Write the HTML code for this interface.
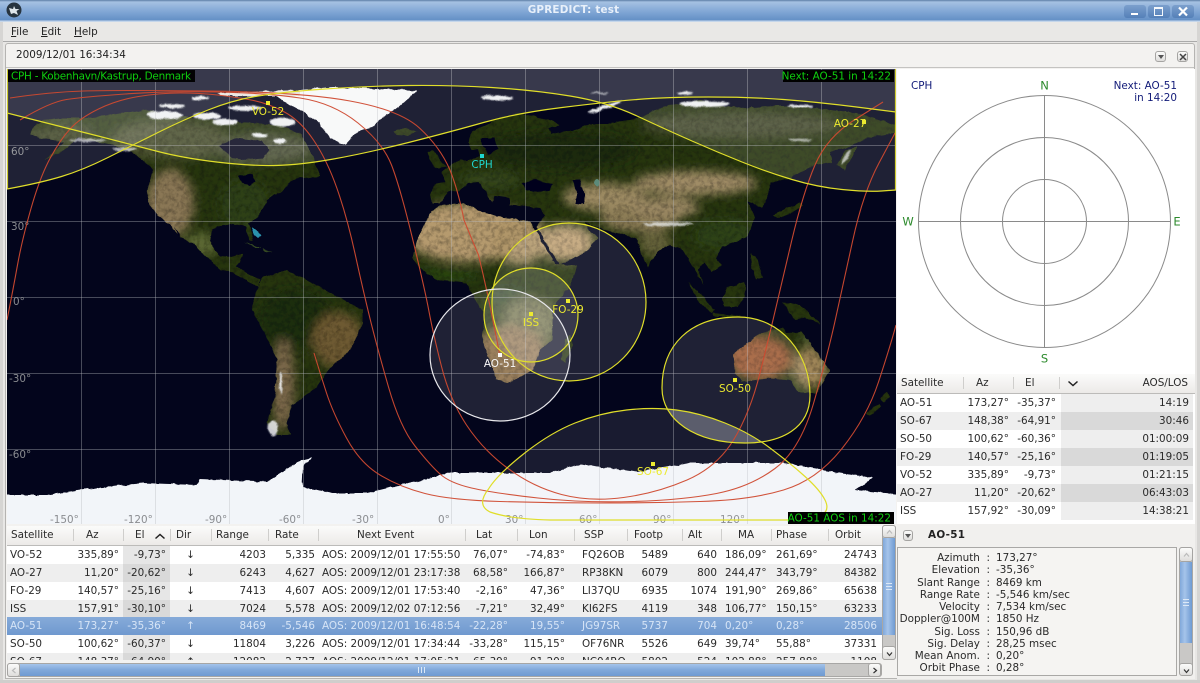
<!DOCTYPE html>
<html><head><meta charset="utf-8"><title>GPREDICT: test</title>
<style>
html,body{margin:0;padding:0;width:1200px;height:683px;overflow:hidden;background:#e8e7e5}
body{font:10.4px/12px "DejaVu Sans","Liberation Sans",sans-serif;color:#2a2a2a;position:relative}
.a{position:absolute}
#title{left:0;top:0;width:1200px;height:22px;background:linear-gradient(#5d7ea6 0,#a5c1e2 2px,#83a8d6 11px,#6490c6 20px,#c5d6ea 21px)}
#title b{position:absolute;left:0;width:1147px;text-align:center;top:4px;color:#e8f0fa;font-size:10.4px;letter-spacing:.2px}
.wb{position:absolute;top:5px;width:22px;height:13px;background:linear-gradient(#7b9fcd,#5480b8);border-radius:3px;border:0}
#menu{left:0;top:22px;width:1200px;height:19px;background:#e9e8e6;border-bottom:1px solid #aaa}
#menu span{position:absolute;top:4px;color:#222}
#tab{left:5px;top:43px;width:1190px;height:636px;background:#f3f2f0;border:1px solid #b5b4b2;border-radius:3px 3px 0 0;box-sizing:border-box}
.hd{background:linear-gradient(#fbfbfa,#eceae8);border-bottom:1px solid #bcbbb9;box-sizing:border-box}
.hd span{position:absolute;top:3px;white-space:nowrap}
.hd i{position:absolute;top:3px;width:1px;height:12px;background:#cfcecc}
.g{display:grid;position:absolute;left:0;width:875px;height:17.85px;line-height:18px;white-space:nowrap;
grid-template-columns:66px 50px 47px 41px 57px 50px 147px 52px 57px 53px 55px 39px 50px 57px 54px}
.g span{display:block;text-align:right;box-sizing:border-box;overflow:visible}
.g span:nth-child(1){text-align:left;padding-left:3px}
.g span:nth-child(2),.g span:nth-child(3){padding-right:4px}
.g span:nth-child(3){background:#e6e6e6}
.g span:nth-child(4){text-align:center}
.g span:nth-child(5){padding-right:2px}
.g span:nth-child(6){padding-right:3px}
.g span:nth-child(7){text-align:left;padding-left:4px}
.g span:nth-child(8),.g span:nth-child(9){padding-right:9px}
.g span:nth-child(10){text-align:left;padding-left:8px}
.g span:nth-child(11){padding-right:14px}
.g span:nth-child(12){padding-right:4px}
.g span:nth-child(13){text-align:left;padding-left:4px}
.g span:nth-child(14){text-align:left;padding-left:5px}
.g span:nth-child(15){padding-right:5px}
.o{background:#eeeeee}.g.o span:nth-child(3){background:#d9d9d9}
.g.s{background:linear-gradient(#86abd9,#6f99cf);color:#d6e4f6}.g.s span:nth-child(3){background:none}
.q{display:grid;position:absolute;left:0;width:296px;height:18px;line-height:18px;white-space:nowrap;grid-template-columns:66px 46px 47px 5px 132px}
.q span{text-align:right;display:block}
.q span:nth-child(1){text-align:left;padding-left:3px}
.q span:nth-child(5){background:#eeeeee;padding-right:4px;box-sizing:border-box}
.q.o span:nth-child(5){background:#d9d9d9}
.sb{position:absolute;background:#c9c8c6;border:1px solid #a8a7a5;box-sizing:border-box;border-radius:3px}
.th{position:absolute;background:linear-gradient(90deg,#80a8da,#a5c4ea 40%,#6e9ad2)}
.thh{position:absolute;background:linear-gradient(#a5c4ea,#80a8da 50%,#6e9ad2)}
.btn{position:absolute;background:linear-gradient(#fbfbfa,#dedddb);border:1px solid #a5a4a2;box-sizing:border-box;border-radius:3px}
.d{position:absolute;left:0;width:92px;text-align:right;white-space:nowrap}
.d2{position:absolute;left:98px;white-space:nowrap}
</style></head>
<body>
<div class="a" id="title"><b>GPREDICT: test</b>
<svg class="a" style="left:5px;top:1px" width="18" height="18" viewBox="0 0 18 18"><circle cx="9" cy="9" r="7.5" fill="#27343f"/><path d="M4 7l4 1 1-3 1.500 3 4 0-3 2 1.500 4-4-2-3 1z" fill="#dfe6ea"/></svg>
<div class="wb" style="left:1124px"><div class="a" style="left:7px;top:8px;width:7px;height:2px;background:#fff"></div></div>
<div class="wb" style="left:1148px"><div class="a" style="left:6px;top:2px;width:9px;height:9px;border:1.500px solid #f4f8fc;box-sizing:border-box;border-top-width:2.500px"></div></div>
<div class="wb" style="left:1172px"><svg class="a" style="left:5px;top:1px" width="12" height="11"><path d="M2 1.500l8 8M10 1.500l-8 8" stroke="#fff" stroke-width="2.200"/></svg></div>
</div>
<div class="a" id="menu"><span style="left:11px"><u>F</u>ile</span><span style="left:41px"><u>E</u>dit</span><span style="left:74px"><u>H</u>elp</span></div>
<div class="a" id="tab"></div>
<div class="a" style="left:16px;top:49px;color:#222">2009/12/01 16:34:34</div>
<div class="btn" style="left:1155px;top:51px;width:11px;height:11px"><svg class="a" style="left:1px;top:2px" width="8" height="6"><path d="M1 1h6L4 5z" fill="#555"/></svg></div>
<div class="btn" style="left:1177px;top:51px;width:11px;height:11px"><svg class="a" style="left:1px;top:1px" width="8" height="8"><path d="M1 1l6 6M7 1L1 7" stroke="#444" stroke-width="1.500"/></svg></div>
<div class="a" style="left:6px;top:67px;width:1188px;height:1px;background:#c4c3c1"></div>

<svg class="a" style="left:7px;top:69px" width="889" height="455" viewBox="7 69 889 455" font-family="DejaVu Sans,Liberation Sans,sans-serif" font-size="10.400">
<defs>
<filter id="bl" x="-20%" y="-20%" width="140%" height="140%"><feGaussianBlur stdDeviation="5"/></filter>
<filter id="bs" x="-20%" y="-20%" width="140%" height="140%"><feGaussianBlur stdDeviation=".9"/></filter>
<filter id="rg" x="-5%" y="-5%" width="110%" height="110%"><feTurbulence type="fractalNoise" baseFrequency=".13" numOctaves="3" seed="4"/><feDisplacementMap in="SourceGraphic" scale="3.500" xChannelSelector="R" yChannelSelector="G"/><feGaussianBlur stdDeviation=".35"/></filter>
<filter id="nz" x="0" y="0" width="100%" height="100%"><feTurbulence type="fractalNoise" baseFrequency=".22" numOctaves="3" seed="9"/><feColorMatrix values="0 0 0 0 0  0 0 0 0 0  0 0 0 0 0  2.200 0 0 0 -.85"/></filter>
<clipPath id="land"><path d="
M43,120 60,118 83,118 110,115 143,110 190,118 240,122 280,125 302,135 312,155 318,170 320,177 310,178 300,177 290,182 280,192 267,200 262,210 257,217 249,223 253,240 250,240 245,226 233,224 220,226 213,229 210,240 212,247 220,256 233,257 243,253 240,262 236,266 245,272 260,280 258,287 240,277 233,273 220,270 207,257 195,245 180,237 170,225 160,217 150,205 147,193 150,180 153,170 143,160 133,153 120,147 100,142 77,138 65,150 45,160 55,150 65,142 40,138 30,135 33,128Z
M263,277 287,270 320,287 330,293 363,310 363,323 350,350 330,368 317,387 300,400 292,405 287,423 290,435 277,435 267,423 275,393 277,360 267,337 252,310 255,293Z
M430,195 434,184 445,182 442,172 450,165 460,160 470,160 480,156 478,150 472,150 468,142 472,132 485,125 500,118 520,113 540,118 552,120 560,125 548,128 552,134 575,130 590,124 610,124 625,120 640,118 652,112 668,105 690,103 700,100 720,106 745,108 775,106 800,106 830,110 860,114 896,125 896,133 870,137 852,145 846,148 830,152 832,162 815,165 800,172 790,178 770,183 768,195 763,208 755,205 748,202 755,217 747,237 722,247 716,258 722,265 712,273 704,262 698,270 703,285 696,272 690,262 683,250 670,245 660,250 653,258 648,268 642,255 637,240 625,235 605,230 596,226 585,222 590,232 598,238 585,252 560,265 550,250 537,226 545,215 540,208 520,206 510,205 510,198 495,196 492,203 486,192 478,182 468,183 460,190 448,192 440,203 432,203Z
M420,233 430,213 440,205 463,203 477,210 503,218 530,221 555,264 577,266 572,283 553,307 552,340 540,350 533,370 507,383 497,380 482,340 485,313 473,297 467,283 437,280 420,268 412,258Z
M565,340 570,335 573,345 566,362 561,360Z
M733,355 760,333 783,327 787,333 802,332 830,370 817,393 800,393 790,380 770,378 743,382 735,373Z
M688,283 695,288 715,310 712,314 700,303Z M722,300 727,287 745,282 745,295 738,307 725,307Z M713,313 740,316 740,318 713,316Z M783,303 800,305 820,323 805,318 795,320Z
M750,253 757,258 763,278 756,280 752,268Z M773,215 790,207 800,203 803,206 790,214 778,218Z M837,165 845,150 857,147 845,170Z
M427,152 434,150 440,160 447,167 435,169 430,160Z M393,131 405,128 417,132 408,136 396,135Z
M865,413 880,403 882,406 870,416Z M880,398 887,392 890,396 884,402Z"/></clipPath>
<clipPath id="c67"><path d="M488.500,489 Q497,475 523.500,454 Q550,433 575,423 Q600,413 626.500,410 Q653,407 676.500,410 Q700,413 725,423 Q750,433 770,448 Q790,463 805,476.500 Q820,490 825,500 Q830,510 822,515 Q810,520 790,520 L550,520 Q510,519 490,512 Q476,505 488.500,489Z"/></clipPath>
</defs>
<rect x="7" y="69" width="889" height="455" fill="#03051c"/>
<g filter="url(#rg)">
<g clip-path="url(#land)">
<rect x="7" y="69" width="889" height="455" fill="#27350f"/>
<g filter="url(#bl)">
<ellipse cx="170" cy="203" rx="24" ry="34" fill="#8a7755"/>
<ellipse cx="200" cy="245" rx="18" ry="13" fill="#5a6633"/>
<ellipse cx="245" cy="205" rx="26" ry="26" fill="#2f4118"/>
<ellipse cx="170" cy="140" rx="60" ry="20" fill="#4e5232"/>
<ellipse cx="265" cy="148" rx="48" ry="15" fill="#50543a"/>
<ellipse cx="60" cy="135" rx="34" ry="9" fill="#4a4f30"/>
<ellipse cx="295" cy="320" rx="38" ry="30" fill="#1f2e0d"/>
<ellipse cx="338" cy="340" rx="26" ry="28" fill="#6e5a32"/>
<ellipse cx="283" cy="385" rx="12" ry="46" fill="#7a684a"/>
<ellipse cx="468" cy="232" rx="66" ry="30" fill="#b59a6e"/>
<ellipse cx="520" cy="240" rx="28" ry="24" fill="#b09669"/>
<ellipse cx="566" cy="243" rx="28" ry="18" fill="#c0a274"/>
<ellipse cx="445" cy="275" rx="34" ry="5" fill="#2c4812"/>
<ellipse cx="508" cy="297" rx="24" ry="10" fill="#253a13"/>
<ellipse cx="530" cy="322" rx="28" ry="24" fill="#6a6a40"/>
<ellipse cx="510" cy="358" rx="38" ry="32" fill="#8e7048"/>
<ellipse cx="640" cy="218" rx="40" ry="14" fill="#8a7a55"/>
<ellipse cx="605" cy="197" rx="42" ry="14" fill="#9c8a62"/>
<ellipse cx="695" cy="183" rx="62" ry="12" fill="#a08c66"/>
<ellipse cx="665" cy="207" rx="34" ry="11" fill="#9a8762"/>
<ellipse cx="725" cy="235" rx="32" ry="16" fill="#2e4218"/>
<ellipse cx="655" cy="243" rx="16" ry="14" fill="#66643a"/>
<ellipse cx="560" cy="150" rx="75" ry="18" fill="#1f2c0c"/>
<ellipse cx="740" cy="125" rx="100" ry="14" fill="#4a5030"/>
<ellipse cx="760" cy="358" rx="32" ry="22" fill="#a05c36"/>
<ellipse cx="810" cy="368" rx="18" ry="20" fill="#a08658"/>
<ellipse cx="810" cy="340" rx="10" ry="8" fill="#4d5a2e"/>
<ellipse cx="490" cy="180" rx="30" ry="8" fill="#36461f"/>
</g>
<rect x="7" y="69" width="889" height="455" filter="url(#nz)" opacity=".28"/>
</g>
<!-- inland water -->
<path d="M219,146 235,138 262,141 270,150 262,158 245,160 232,158Z" fill="#0c0f24"/>
<path d="M522,183 535,180 553,184 550,191 535,192 525,190Z M572,180 580,180 585,195 584,204 575,203 577,192Z M480,138 495,138 498,150 488,155 484,148Z M238,176 252,174 256,182 248,185 242,183Z" fill="#03051c"/>
<path d="M175,227 181,237 178,236Z" fill="#03051c"/>
<ellipse cx="597" cy="183" rx="2.500" ry="4" fill="#5d8a7a"/>
<path d="M253,228 262,235 258,238 252,233Z" fill="#2b93ad"/>
<path d="M244,242 262,248 256,248Z M262,249 272,251 265,252Z" fill="#344824"/>
<g fill="#eef0f2" filter="url(#bs)">
<ellipse cx="165" cy="115" rx="18" ry="4"/><ellipse cx="172" cy="106" rx="13" ry="2"/><ellipse cx="200" cy="98" rx="9" ry="2"/><ellipse cx="207" cy="116" rx="14" ry="3.500"/><ellipse cx="225" cy="122" rx="12" ry="3.500"/><ellipse cx="283" cy="122" rx="13" ry="4.500"/><ellipse cx="245" cy="108" rx="17" ry="2.500"/><ellipse cx="260" cy="135" rx="8" ry="2.500"/><ellipse cx="280" cy="141" rx="7" ry="2.500"/><ellipse cx="88" cy="140" rx="18" ry="1.500" opacity=".7"/><ellipse cx="125" cy="149" rx="12" ry="2" opacity=".7"/>
<ellipse cx="497" cy="98" rx="16" ry="2.500"/><ellipse cx="605" cy="107" rx="18" ry="2" transform="rotate(-20 605 107)"/><ellipse cx="705" cy="104" rx="25" ry="3"/><ellipse cx="685" cy="93" rx="8" ry="1.500"/><ellipse cx="600" cy="93" rx="9" ry="1" opacity=".6"/><ellipse cx="800" cy="106" rx="13" ry="1.500"/>
<ellipse cx="800" cy="140" rx="12" ry="1.500" opacity=".6"/><ellipse cx="846" cy="157" rx="1.800" ry="9" transform="rotate(30 846 157)" opacity=".7"/>
<ellipse cx="668" cy="224" rx="25" ry="1.800" opacity=".75"/><ellipse cx="281" cy="383" rx="1.200" ry="11"/><ellipse cx="273" cy="428" rx="5" ry="8" opacity=".85"/>
</g>
<path d="M275,95 300,90 333,87 417,91 400,106 385,116 372,127 358,131 345,145 330,138 318,122 300,110 285,102Z" fill="#f8f9f9"/>
<path d="M217,93 300,90 300,96 225,96Z" fill="#e8e2da"/>
<path d="M-5,495 47,495 80,490 143,483 197,485 200,479 267,482 283,472 297,462 313,457 303,467 302,487 333,493 367,493 450,473 493,473 550,473 580,464 637,472 690,463 783,463 873,478 855,490 905,495 905,545 -5,545Z" fill="#f2f5f9"/>
</g>
<!-- grid -->
<g stroke="#b8bac0" stroke-opacity=".38" fill="none">
<path d="M81.500 69V524M155.500 69V524M229.500 69V524M303.500 69V524M377.500 69V524M451.500 69V524M525.500 69V524M599.500 69V524M673.500 69V524M747.500 69V524M821.500 69V524"/>
<path d="M7 145.500H896M7 221.500H896M7 297.500H896M7 373.500H896M7 449.500H896"/>
</g>
<g fill="#8a8c90"><text x="11" y="155">60°</text><text x="11" y="230">30°</text><text x="13" y="305">0°</text><text x="9" y="382">-30°</text><text x="9" y="458">-60°</text>
<text x="50" y="523">-150°</text><text x="124" y="523">-120°</text><text x="205" y="523">-90°</text><text x="279" y="523">-60°</text><text x="352" y="523">-30°</text><text x="438" y="523">0°</text><text x="505" y="523">30°</text><text x="579" y="523">60°</text><text x="653" y="523">90°</text><text x="720" y="523">120°</text></g>
<!-- footprint fills -->
<g fill="#fff" fill-opacity=".115" stroke="none">
<path d="M7,113 Q67,128 100,136.500 Q133,145 158,151.500 Q183,158 216.500,162 Q250,166 275,165.500 Q300,165 333.500,159 Q367,153 408.500,142.500 Q450,132 483.500,122.500 Q517,113 562,107.500 Q607,102 637,99.500 Q667,97 708.500,97 Q750,97 783.500,99.500 Q817,102 856.500,107 L896,112 V69 H7Z"/>
<path d="M7,189 Q40,183 61.500,176.500 Q83,170 108,157.500 Q133,145 158,132.500 Q183,120 208,110 Q233,100 258,96 Q283,92 325,89 Q367,86 408.500,85.500 Q450,85 491.500,87.500 Q533,90 570,96 Q607,102 637,116 Q667,130 692,141 Q717,152 742,162 Q767,172 792,179.500 Q817,187 842,189.500 Q867,192 881.500,191 L896,190 V69 H7Z"/>
<ellipse cx="531" cy="315" rx="47" ry="47"/><ellipse cx="569" cy="302" rx="77" ry="79"/><ellipse cx="500" cy="355" rx="70" ry="66"/>
<path d="M662,388C662,345 690,317 738,317 782,317 810,355 810,395 810,428 782,443 745,443 695,443 662,420 662,388Z"/>
<path d="M488.500,489 Q497,475 523.500,454 Q550,433 575,423 Q600,413 626.500,410 Q653,407 676.500,410 Q700,413 725,423 Q750,433 770,448 Q790,463 805,476.500 Q820,490 825,500 Q830,510 822,515 Q810,520 790,520 L550,520 Q510,519 490,512 Q476,505 488.500,489Z" fill-opacity=".09"/>
<path clip-path="url(#c67)" d="M662,388C662,345 690,317 738,317 782,317 810,355 810,395 810,428 782,443 745,443 695,443 662,420 662,388Z" fill-opacity=".2"/>
</g>
<!-- tracks -->
<g fill="none" stroke="#cf4a30" stroke-width="1.100" stroke-opacity=".95">
<path d="M314,353 Q320,373 326.500,393 Q333,413 346.500,438 Q360,463 380,475 Q400,487 425,493.500 Q450,500 500,501.500 Q550,503 600,503 Q650,503 700,501.500 Q750,500 783.500,490 Q817,480 842,448.500 Q867,417 878.500,382 Q890,347 896,325"/>
<path d="M7,320 Q13,290 17.500,265 Q22,240 31,208.500 Q40,177 50,158.500 Q60,140 70,129 Q80,118 98.500,109 Q117,100 138.500,96.500 Q160,93 180,93 Q200,93 217.500,95 Q235,97 251,100 Q267,103 283.500,111.500 Q300,120 313.500,140 Q327,160 337,188.500 Q347,217 355,253.500 Q363,290 370,318.500 Q377,347 388.500,387 Q400,427 415,446 Q430,465 440,474 Q450,483 471.500,488 Q493,493 538,498 Q583,503 633,501.500 Q683,500 716.500,493.500 Q750,487 775,468.500 Q800,450 813.500,403.500 Q827,357 834.500,323.500 Q842,290 852.500,241.500 Q863,193 879,163 L895,133"/>
<path d="M20,120 Q50,102 66.500,99.500 Q83,97 125,94 Q167,91 217,92 Q267,93 300,98 Q333,103 358,123 Q383,143 391.500,165 Q400,187 412.500,238.500 Q425,290 429,311.500 Q433,333 441.500,366.500 Q450,400 466.500,425 Q483,450 508,468.500 Q533,487 561.500,494.500 Q590,502 623.500,497.500 Q657,493 687,480 Q717,467 733.500,440 Q750,413 760,373 Q770,333 775,311.500 Q780,290 791.500,241.500 Q803,193 815,165 Q827,137 855,119.500 L883,102"/>
<path d="M10,98 Q50,92 83.500,91 Q117,90 208.500,91 Q300,92 350,101 Q400,110 420,128.500 Q440,147 450,170 Q458,190 464,220 Q470,235 478.500,255 Q487,290 493.500,323.500 Q498,345 500,357"/>
</g>
<!-- footprint strokes -->
<g fill="none" stroke="#e0de2a" stroke-width="1.200">
<path d="M7,113 Q67,128 100,136.500 Q133,145 158,151.500 Q183,158 216.500,162 Q250,166 275,165.500 Q300,165 333.500,159 Q367,153 408.500,142.500 Q450,132 483.500,122.500 Q517,113 562,107.500 Q607,102 637,99.500 Q667,97 708.500,97 Q750,97 783.500,99.500 Q817,102 856.500,107 L896,112"/>
<path d="M7,189 Q40,183 61.500,176.500 Q83,170 108,157.500 Q133,145 158,132.500 Q183,120 208,110 Q233,100 258,96 Q283,92 325,89 Q367,86 408.500,85.500 Q450,85 491.500,87.500 Q533,90 570,96 Q607,102 637,116 Q667,130 692,141 Q717,152 742,162 Q767,172 792,179.500 Q817,187 842,189.500 Q867,192 881.500,191 L896,190"/>
<path d="M7.500,69V189M895.500,69V190" stroke="#cfcc30"/>
<ellipse cx="531" cy="315" rx="47" ry="47"/><ellipse cx="569" cy="302" rx="77" ry="79"/>
<path d="M662,388C662,345 690,317 738,317 782,317 810,355 810,395 810,428 782,443 745,443 695,443 662,420 662,388Z"/>
<path d="M488.500,489 Q497,475 523.500,454 Q550,433 575,423 Q600,413 626.500,410 Q653,407 676.500,410 Q700,413 725,423 Q750,433 770,448 Q790,463 805,476.500 Q820,490 825,500 Q830,510 822,515 Q810,520 790,520 L550,520 Q510,519 490,512 Q476,505 488.500,489Z"/>
</g>
<ellipse cx="500" cy="355" rx="70" ry="66" fill="none" stroke="#e8e8ec" stroke-width="1.200"/>
<!-- satellites -->
<g fill="#ecea30" text-anchor="middle">
<rect x="266" y="101" width="4" height="4"/><text x="268" y="115">VO-52</text>
<rect x="862" y="120" width="4" height="4"/><text x="850" y="127">AO-27</text>
<rect x="529" y="312" width="4" height="4"/><text x="531" y="326">ISS</text>
<rect x="566" y="299" width="4" height="4"/><text x="568" y="313">FO-29</text>
<rect x="733" y="378" width="4" height="4"/><text x="735" y="392">SO-50</text>
<rect x="651" y="462" width="4" height="4"/><text x="653" y="475">SO-67</text>
</g>
<g fill="#fafafa" text-anchor="middle"><rect x="498" y="353" width="4" height="4"/><text x="500" y="367">AO-51</text></g>
<g fill="#1fd8d0" text-anchor="middle"><rect x="480" y="154" width="4" height="4"/><text x="482" y="168">CPH</text></g>
<rect x="8" y="70" width="187" height="12" fill="#000" fill-opacity=".95"/><text x="11" y="79.500" fill="#0fd00f" textLength="180">CPH - Kobenhavn/Kastrup, Denmark</text>
<rect x="783" y="70" width="111" height="12" fill="#000"/><text x="891" y="79.500" fill="#0fd00f" text-anchor="end">Next: AO-51 in 14:22</text>
<rect x="788" y="512" width="106" height="12" fill="#000"/><text x="891" y="521.500" fill="#0fd00f" text-anchor="end">AO-51 AOS in 14:22</text>
</svg>

<!-- polar -->
<div class="a" style="left:897px;top:69px;width:298px;height:456px;background:#fff"></div>
<svg class="a" style="left:897px;top:69px" width="298" height="305" font-family="DejaVu Sans,Liberation Sans,sans-serif" font-size="10.400">
<g fill="none" stroke="#8a8a8a" transform="translate(-897,-69)"><circle cx="1044.500" cy="221.500" r="126"/><circle cx="1044.500" cy="221.500" r="84"/><circle cx="1044.500" cy="221.500" r="42"/><path d="M1044.500 96V348M919 221.500H1171"/></g>
<g fill="#2c8a2c" font-size="11.500" text-anchor="middle"><text x="147.500" y="20.500">N</text><text x="147.500" y="293.500">S</text><text x="11" y="156.500">W</text><text x="280" y="156.500">E</text></g>
<g fill="#111a78"><text x="14" y="20">CPH</text><text x="280" y="20" text-anchor="end">Next: AO-51</text><text x="280" y="32" text-anchor="end">in 14:20</text></g>
</svg>
<!-- right table -->
<div class="a hd" style="left:897px;top:374px;width:298px;height:20px">
<span style="left:4px">Satellite</span><span style="left:79px">Az</span><span style="left:128px">El</span>
<svg class="a" style="left:170px;top:6px" width="12" height="8"><path d="M1.500 1.500L6 5.500 10.500 1.500" fill="none" stroke="#222" stroke-width="1.500"/></svg>
<span style="right:7px">AOS/LOS</span><i style="left:66px"></i><i style="left:116px"></i><i style="left:162px"></i></div>
<div class="a" style="left:897px;top:394px;width:298px;height:127px">
<div class="q" style="top:0"><span>AO-51</span><span>173,27°</span><span>-35,37°</span><span></span><span>14:19</span></div>
<div class="q o" style="top:18px"><span>SO-67</span><span>148,38°</span><span>-64,91°</span><span></span><span>30:46</span></div>
<div class="q" style="top:36px"><span>SO-50</span><span>100,62°</span><span>-60,36°</span><span></span><span>01:00:09</span></div>
<div class="q o" style="top:54px"><span>FO-29</span><span>140,57°</span><span>-25,16°</span><span></span><span>01:19:05</span></div>
<div class="q" style="top:72px"><span>VO-52</span><span>335,89°</span><span>-9,73°</span><span></span><span>01:21:15</span></div>
<div class="q o" style="top:90px"><span>AO-27</span><span>11,20°</span><span>-20,62°</span><span></span><span>06:43:03</span></div>
<div class="q" style="top:108px"><span>ISS</span><span>157,92°</span><span>-30,09°</span><span></span><span>14:38:21</span></div>
</div>
<!-- main table -->
<div class="a hd" style="left:7px;top:526px;width:875px;height:20px">
<span style="left:4px">Satellite</span><span style="left:79px">Az</span><span style="left:128px">El</span>
<svg class="a" style="left:147px;top:6px" width="12" height="8"><path d="M1.500 6.500L6 2.500 10.500 6.500" fill="none" stroke="#222" stroke-width="1.500"/></svg>
<span style="left:169px">Dir</span><span style="left:209px">Range</span><span style="left:268px">Rate</span><span style="left:350px">Next Event</span><span style="left:469px">Lat</span><span style="left:522px">Lon</span><span style="left:577px">SSP</span><span style="left:627px">Footp</span><span style="left:681px">Alt</span><span style="left:731px">MA</span><span style="left:769px">Phase</span><span style="left:828px">Orbit</span>
<i style="left:66px"></i><i style="left:116px"></i><i style="left:163px"></i><i style="left:204px"></i><i style="left:261px"></i><i style="left:311px"></i><i style="left:458px"></i><i style="left:510px"></i><i style="left:567px"></i><i style="left:620px"></i><i style="left:675px"></i><i style="left:714px"></i><i style="left:764px"></i><i style="left:821px"></i></div>
<div class="a" style="left:7px;top:546px;width:875px;height:114px;overflow:hidden;background:#fff">
<div class="g" style="top:0"><span>VO-52</span><span>335,89°</span><span>-9,73°</span><span>↓</span><span>4203</span><span>5,335</span><span>AOS: 2009/12/01 17:55:50</span><span>76,07°</span><span>-74,83°</span><span>FQ26OB</span><span>5489</span><span>640</span><span>186,09°</span><span>261,69°</span><span>24743</span></div>
<div class="g o" style="top:17.850px"><span>AO-27</span><span>11,20°</span><span>-20,62°</span><span>↓</span><span>6243</span><span>4,627</span><span>AOS: 2009/12/01 23:17:38</span><span>68,58°</span><span>166,87°</span><span>RP38KN</span><span>6079</span><span>800</span><span>244,47°</span><span>343,79°</span><span>84382</span></div>
<div class="g" style="top:35.700px"><span>FO-29</span><span>140,57°</span><span>-25,16°</span><span>↓</span><span>7413</span><span>4,607</span><span>AOS: 2009/12/01 17:53:40</span><span>-2,16°</span><span>47,36°</span><span>LI37QU</span><span>6935</span><span>1074</span><span>191,90°</span><span>269,86°</span><span>65638</span></div>
<div class="g o" style="top:53.550px"><span>ISS</span><span>157,91°</span><span>-30,10°</span><span>↓</span><span>7024</span><span>5,578</span><span>AOS: 2009/12/02 07:12:56</span><span>-7,21°</span><span>32,49°</span><span>KI62FS</span><span>4119</span><span>348</span><span>106,77°</span><span>150,15°</span><span>63233</span></div>
<div class="g s" style="top:71.400px"><span>AO-51</span><span>173,27°</span><span>-35,36°</span><span>↑</span><span>8469</span><span>-5,546</span><span>AOS: 2009/12/01 16:48:54</span><span>-22,28°</span><span>19,55°</span><span>JG97SR</span><span>5737</span><span>704</span><span>0,20°</span><span>0,28°</span><span>28506</span></div>
<div class="g" style="top:89.250px"><span>SO-50</span><span>100,62°</span><span>-60,37°</span><span>↓</span><span>11804</span><span>3,226</span><span>AOS: 2009/12/01 17:34:44</span><span>-33,28°</span><span>115,15°</span><span>OF76NR</span><span>5526</span><span>649</span><span>39,74°</span><span>55,88°</span><span>37331</span></div>
<div class="g o" style="top:107.100px"><span>SO-67</span><span>148,37°</span><span>-64,90°</span><span>↑</span><span>12082</span><span>2,737</span><span>AOS: 2009/12/01 17:05:21</span><span>-65,39°</span><span>-91,20°</span><span>NC04RO</span><span>5802</span><span>524</span><span>102,88°</span><span>257,88°</span><span>1108</span></div>
</div>
<!-- h scrollbar -->
<div class="sb" style="left:7px;top:663px;width:875px;height:14px"></div>
<div class="btn" style="left:7px;top:663px;width:13px;height:14px"><svg class="a" style="left:3px;top:3px" width="6" height="7"><path d="M4.500 1L1.500 3.500 4.500 6" fill="none" stroke="#bbb" stroke-width="1.200"/></svg></div>
<div class="thh" style="left:20px;top:664px;width:805px;height:12px"><div class="a" style="left:398px;top:3px;width:7px;height:6px;background:repeating-linear-gradient(90deg,#dce8f6 0 1px,transparent 1px 3px)"></div></div>
<div class="btn" style="left:868px;top:663px;width:13px;height:14px"><svg class="a" style="left:3px;top:3px" width="6" height="7"><path d="M1.500 1L4.500 3.500 1.500 6" fill="none" stroke="#333" stroke-width="1.200"/></svg></div>
<!-- v scrollbar 1 -->
<div class="sb" style="left:882px;top:525px;width:14px;height:135px"></div>
<div class="btn" style="left:882px;top:525px;width:14px;height:13px"><svg class="a" style="left:3px;top:3px" width="7" height="6"><path d="M1 4.500L3.500 1.500 6 4.500" fill="none" stroke="#bbb" stroke-width="1.200"/></svg></div>
<div class="th" style="left:883px;top:538px;width:12px;height:97px"><div class="a" style="left:3px;top:45px;width:6px;height:7px;background:repeating-linear-gradient(#dce8f6 0 1px,transparent 1px 3px)"></div></div>
<div class="btn" style="left:882px;top:646px;width:14px;height:14px"><svg class="a" style="left:3px;top:4px" width="7" height="6"><path d="M1 1.500L3.500 4.500 6 1.500" fill="none" stroke="#333" stroke-width="1.200"/></svg></div>
<!-- details -->
<div class="a" style="left:897px;top:524px;width:298px;height:155px;background:#f1f0ee"></div>
<div class="btn" style="left:903px;top:530px;width:10px;height:11px"><svg class="a" style="left:1px;top:2px" width="6" height="6"><path d="M0 1h6L3 5z" fill="#555"/></svg></div>
<div class="a" style="left:928px;top:529px;font-weight:bold;color:#222;letter-spacing:.3px">AO-51</div>
<div class="a" style="left:897px;top:547px;width:280px;height:129px;background:#f5f4f2;border:1px solid #a9a8a6;box-sizing:border-box;overflow:hidden">
<div class="d" style="top:4px">Azimuth&nbsp;&nbsp;:</div><div class="d2" style="top:4px">173,27°</div>
<div class="d" style="top:16.300px">Elevation&nbsp;&nbsp;:</div><div class="d2" style="top:16.300px">-35,36°</div>
<div class="d" style="top:28.500px">Slant Range&nbsp;&nbsp;:</div><div class="d2" style="top:28.500px">8469 km</div>
<div class="d" style="top:40.800px">Range Rate&nbsp;&nbsp;:</div><div class="d2" style="top:40.800px">-5,546 km/sec</div>
<div class="d" style="top:53px">Velocity&nbsp;&nbsp;:</div><div class="d2" style="top:53px">7,534 km/sec</div>
<div class="d" style="top:65.300px">Doppler@100M&nbsp;&nbsp;:</div><div class="d2" style="top:65.300px">1850 Hz</div>
<div class="d" style="top:77.500px">Sig. Loss&nbsp;&nbsp;:</div><div class="d2" style="top:77.500px">150,96 dB</div>
<div class="d" style="top:89.800px">Sig. Delay&nbsp;&nbsp;:</div><div class="d2" style="top:89.800px">28,25 msec</div>
<div class="d" style="top:102px">Mean Anom.&nbsp;&nbsp;:</div><div class="d2" style="top:102px">0,20°</div>
<div class="d" style="top:114.300px">Orbit Phase&nbsp;&nbsp;:</div><div class="d2" style="top:114.300px">0,28°</div>
</div>
<div class="sb" style="left:1179px;top:547px;width:14px;height:128px"></div>
<div class="btn" style="left:1179px;top:547px;width:14px;height:15px"><svg class="a" style="left:3px;top:4px" width="7" height="6"><path d="M1 4.500L3.500 1.500 6 4.500" fill="none" stroke="#bbb" stroke-width="1.200"/></svg></div>
<div class="th" style="left:1180px;top:562px;width:12px;height:81px"><div class="a" style="left:3px;top:37px;width:6px;height:7px;background:repeating-linear-gradient(#dce8f6 0 1px,transparent 1px 3px)"></div></div>
<div class="btn" style="left:1179px;top:663px;width:14px;height:13px"><svg class="a" style="left:3px;top:4px" width="7" height="6"><path d="M1 1.500L3.500 4.500 6 1.500" fill="none" stroke="#333" stroke-width="1.200"/></svg></div>
<!-- window edges -->
<div class="a" style="left:0;top:22px;width:3px;height:661px;background:#d6d5d3"></div>
<div class="a" style="left:1197px;top:22px;width:3px;height:661px;background:#d6d5d3"></div>
<div class="a" style="left:0;top:680px;width:1200px;height:3px;background:#cfcecc"></div>
</body></html>
